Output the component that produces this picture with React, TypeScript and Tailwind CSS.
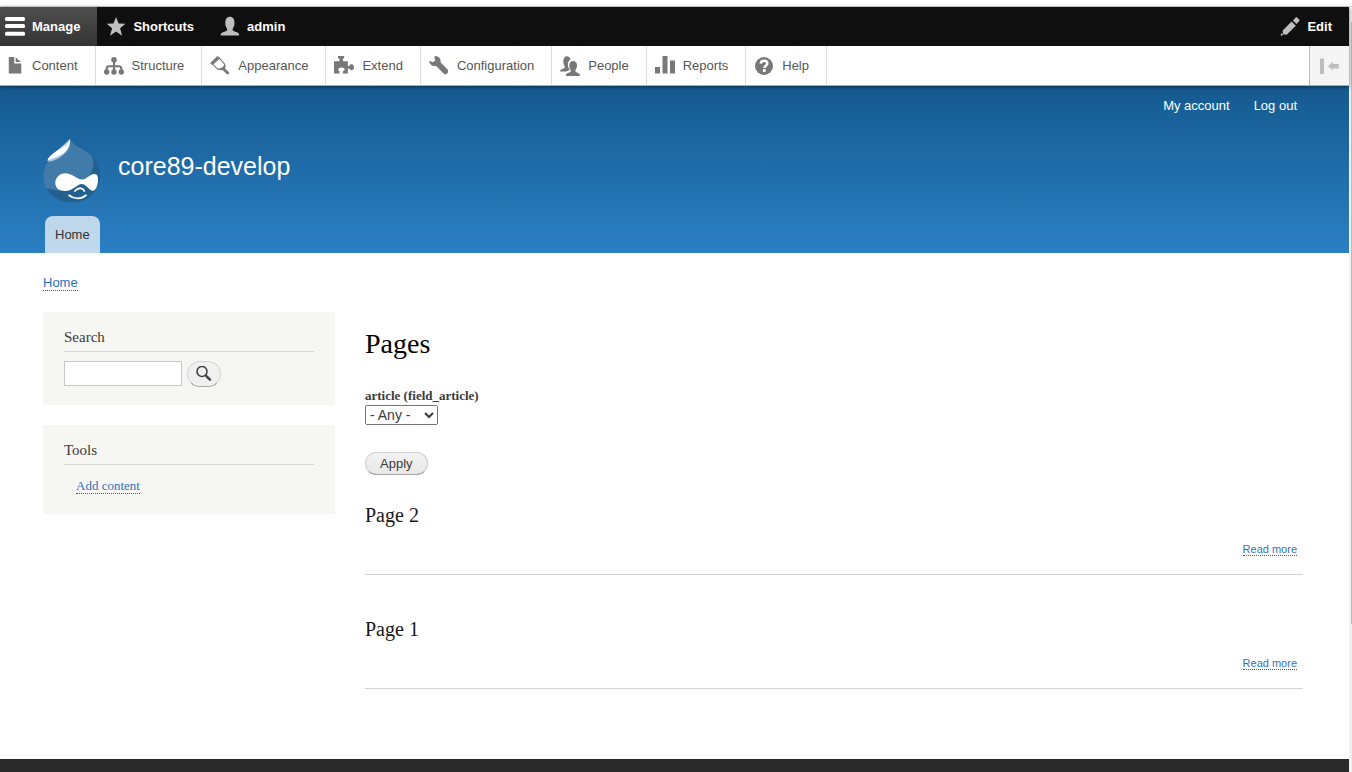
import React from 'react';

type IconProps = { className?: string };

const Svg = ({ children, className = '' }: IconProps & { children: React.ReactNode }) => (
  <svg viewBox="0 0 20 20" className={`h-5 w-5 shrink-0 ${className}`} fill="currentColor" aria-hidden="true">
    {children}
  </svg>
);

const MenuIcon = () => (
  <Svg className="-mt-px text-white">
    <rect y="1" width="20" height="4" rx="1.5" />
    <rect y="8" width="20" height="4" rx="1.5" />
    <rect y="15.700" width="20" height="4" rx="1.5" />
  </Svg>
);

const StarIcon = () => (
  <Svg className="-mt-px text-[#bebebe]">
    <path d="M10.100 0.900l2.500 6.600 6.800.3-5.300 4.500 2.100 7.500-6.100-4.400-6.100 4.400 2.100-7.500L.7 7.800l6.800-.3z" />
  </Svg>
);

const UserIcon = () => (
  <Svg className="-mt-px text-[#bebebe]">
    <path d="M.6 19.500c0-2.200 1-2.800 3-3.500 2.100-.7 3.700-1.200 3.700-2.500 0-1.200-2-2.600-2-6.600C5.300 2.800 7 .7 9.900.7s4.600 2.100 4.600 6.200c0 4-2 5.400-2 6.600 0 1.300 1.600 1.800 3.700 2.500 2 .7 3 1.300 3 3.500z" />
  </Svg>
);

const PencilIcon = () => (
  <Svg className="-mt-px text-[#bebebe]">
    <path d="M2.600 14.600L11.600 5.600l4.200 4.200-9.100 8.900-3.700-.5z" />
    <path d="M12.900 4.400l2.600-2.700c.6-.6 1.200-.6 1.800 0l1.800 1.800c.6.600.6 1.200 0 1.800l-2.700 2.600z" />
    <path d="M1.600 17l1.600 1.800-1.900.9c-.5.200-.9-.2-.7-.7z" />
  </Svg>
);

const ContentIcon = () => (
  <Svg>
    <path d="M3.800 1h5.400v6.500h7.100v10H3.800z" />
    <path d="M10.700 1.300v4.800h5.100z" />
  </Svg>
);

const StructureIcon = () => (
  <Svg>
    <circle cx="10" cy="3.700" r="2.800" />
    <circle cx="2.700" cy="16" r="2.700" />
    <circle cx="10" cy="16" r="2.700" />
    <circle cx="17.300" cy="16" r="2.700" />
    <path d="M10 4v11M2.700 15v-2.500c0-1.500.8-2.300 2.300-2.300h10c1.500 0 2.300.8 2.300 2.300V15" fill="none" stroke="currentColor" strokeWidth="2.100" />
  </Svg>
);

const AppearanceIcon = () => (
  <Svg>
    <path d="M7.300 0L9.700 2 2.300 9 0 7.300z" />
    <path d="M2.700 8.300L9.400 2l5.300 6.300c.1 2-1.600 3.800-4.300 4.500L8 13.500z" fill="white" stroke="currentColor" strokeWidth="1.100" />
    <path d="M8 13.200c3 .2 6-1.900 6.300-4.900l1.200 1.400c.4.900 0 1.900-.6 2.500l4 4.100c.7.700.4 1.200-.3 1.800-.7.700-1.300.6-1.900 0l-4.200-4.100c-.8.500-2.800.3-4.500-.8z" />
  </Svg>
);

const ExtendIcon = () => (
  <Svg>
    <path d="M0 5.200h5.500V2.800L4 2.100V0h6.200v2.100L8.900 2.800v2.400h5v4.700h1.300c.6-1.300 1.400-1.700 2.600-1.700 1.400 0 2.200 1.400 2.200 3s-.8 3-2.200 3c-1.200 0-2-.4-2.600-1.700h-1.300v4.900H8.900v-2.100c1.300-.4 1.700-1.100 1.700-1.700 0-1.200-1.400-2.100-3-2.100s-3.300.9-3.300 2.100c0 .8.5 1.300 1.200 1.700v2.100H0z" />
  </Svg>
);

const ConfigurationIcon = () => (
  <Svg>
    <path d="M.2 4.800l3.700 1.400 2.400-1.700L5.200.5c3.800-.9 7 1.800 6.300 5.800l7 7.200c1 1.200.8 2.900-.3 3.900-1.200 1.100-2.900.9-3.900-.2L7.100 9.900C3.500 10.700.2 8.500.2 4.800z" />
  </Svg>
);

const PeopleIcon = () => (
  <Svg>
    <path d="M0 15.400c0-2.300 4.800-2.400 4.800-4.300 0-1.200-1.500-2.200-1.500-5.600C3.300 2.200 4.600.2 6.900.2c2 0 3.300 1.300 3.500 3.600-1.800 1-2.500 2.600-2.500 5 0 3.300 1.700 4 1.700 5-.3 1-2.200.9-3.200 1.600z" />
    <path d="M5.800 20c0-3.800 5.100-2.900 5.100-5.200 0-1.100-1.600-1.900-1.600-5.300 0-2.900 1.400-4.500 3.800-4.500S17 6.600 17 9.500c0 3.400-1.700 4.200-1.700 5.300 0 2.300 4.700 1.400 4.700 5.200z" />
  </Svg>
);

const ReportsIcon = () => (
  <Svg>
    <rect y="11" width="5" height="6.500" />
    <rect x="7.500" width="5" height="17.500" />
    <rect x="15" y="4.500" width="5" height="13" />
  </Svg>
);

const HelpIcon = () => (
  <Svg>
    <circle cx="10" cy="10" r="9" />
    <path d="M6.800 7.600C6.900 5.700 8.100 4.800 10 4.800s3.300.9 3.300 2.600c0 2.300-2.900 2-2.900 4.700" fill="none" stroke="white" strokeWidth="2.500" />
    <rect x="8.900" y="13.200" width="2.800" height="2.700" fill="white" />
  </Svg>
);

const DropletLogo = () => (
  <svg viewBox="0 0 57 65" className="h-[65px] w-[57px]" aria-hidden="true">
    <path d="M27 0c1 4.500 5.500 7.500 12 11 11 6 18 14 18 26C57 53.500 44 64.500 28.500 64.500S.5 53 .5 38C.5 26 8 17.500 16 13 22 9.500 26.500 6 27 0z" fill="#22608f" />
    <path d="M27 0c1 4.500 5.500 7.500 12 11 6.500 3.600 11.500 6.500 11.500 13.500C50.500 39 36 51.500 21 52.500c-6 .4-12.500-.8-18.500-2.500C1.200 46.500.5 43 .5 38 .5 26 8 17.500 16 13 22 9.500 26.500 6 27 0z" fill="#417ba9" />
    <path d="M5.500 24C13 22.500 24 17 26.500 7.500L27 1 7 19z" fill="#a9c6df" />
    <path d="M26.700.5C27.500 6.500 26 11 20 15.500c-5 3.800-11 4.500-15.300 7.500-.8-3 6-8.500 11.300-11.500C21 8.500 26 6.500 26.700.5z" fill="white" />
    <path d="M12.300 45c0-5.500 4.500-9.700 10-9.700 7 0 11.500 6.200 16.700 6.200 4.500 0 8-5.500 12.500-5.500 3 0 3.700 3 3.500 6.500-.2 5-2.300 10.200-5 10.200-3.800 0-7-6.700-11.300-6.700-4.700 0-8.700 7-16.700 7-5.700 0-9.700-3-9.700-8z" fill="white" />
    <path d="M32 53c2-2.300 4-3 6-2.700 1.700.2 2.700 1 3.300 2.700M26 57.300c5 4 12 4.200 17 0" fill="none" stroke="white" strokeWidth="1.800" strokeLinecap="round" />
  </svg>
);

const trayItems = [
  { label: 'Structure', icon: StructureIcon },
  { label: 'Appearance', icon: AppearanceIcon },
  { label: 'Extend', icon: ExtendIcon },
  { label: 'Configuration', icon: ConfigurationIcon },
  { label: 'People', icon: PeopleIcon },
  { label: 'Reports', icon: ReportsIcon },
  { label: 'Help', icon: HelpIcon },
];

const pages = ['Page 2', 'Page 1'];

const Toolbar = () => (
  <div className="relative z-10 shadow-[0_1px_4px_rgba(0,0,0,0.5)]">
    <nav className="flex h-[39px] bg-[#0f0f0f] font-bold text-white" aria-label="Toolbar">
      <a href="#manage" className="flex items-center gap-[7px] bg-gradient-to-b from-[#4f4f4f] to-[#333] pr-[17px] pl-[5px]">
        <MenuIcon />
        Manage
      </a>
      <a href="#shortcuts" className="flex items-center gap-[7px] pr-[17px] pl-[9px]">
        <StarIcon />
        Shortcuts
      </a>
      <a href="#admin" className="flex items-center gap-[7px] px-[9px]">
        <UserIcon />
        admin
      </a>
      <a href="#edit" className="ml-auto flex items-center gap-[7px] pr-[17px] pl-[9px]">
        <PencilIcon />
        Edit
      </a>
    </nav>
    <nav className="flex h-10 border-b border-[#aaa] bg-white text-[#565656]" aria-label="Administration menu">
      <a href="#content" className="flex items-center gap-[7px] border-r border-[#ddd] pr-[17px] pl-[5px]">
        <span className="text-[#787878]"><ContentIcon /></span>
        Content
      </a>
      {trayItems.map(({ label, icon: Icon }) => (
        <a key={label} href={`#${label.toLowerCase()}`} className="flex items-center gap-2 border-r border-[#ddd] pr-[17px] pl-2">
          <span className="text-[#787878]"><Icon /></span>
          {label}
        </a>
      ))}
      <button type="button" aria-label="Vertical orientation" className="ml-auto flex w-10 items-center justify-center border-l border-[#bbb] bg-[#f4f4f4] text-[#bebebe]">
        <Svg>
          <rect y="2.500" width="4" height="15.500" />
          <path d="M7.800 10.200l5.200-4.400v2.300h5.800v4.400H13v2.100z" />
        </Svg>
      </button>
    </nav>
  </div>
);

const Header = () => (
  <header className="flex flex-col bg-gradient-to-b from-[#155a90] to-[#2b80c3] pr-[46px] pl-[43px] text-white">
    <nav className="flex justify-end gap-6 pt-[10px] pr-[6px] leading-5" aria-label="User account menu">
      <a href="#account">My account</a>
      <a href="#logout">Log out</a>
    </nav>
    <div className="mt-[22px] flex items-center gap-[18px]">
      <a href="#home" aria-label="Home"><DropletLogo /></a>
      <a href="#home" className="mb-[10px] text-[25px] leading-8">core89-develop</a>
    </div>
    <nav className="mt-[13px] ml-[2px] flex" aria-label="Main navigation">
      <a href="#home" className="h-[37px] rounded-t-lg bg-white/70 px-[10px] leading-[37px] text-[#333]">Home</a>
    </nav>
  </header>
);

const Sidebar = () => (
  <aside className="w-[292px] shrink-0 font-['Liberation_Serif',serif]">
    <section className="h-[93px] bg-[#f6f6f2] px-[21px] pt-4">
      <h2 className="border-b border-[#d3d5d5] pb-1 text-[15px] leading-[19px] text-[#3b3b3b]">Search</h2>
      <form className="mt-[9px] flex gap-[5px]" onSubmit={(e) => e.preventDefault()}>
        <input type="search" aria-label="Search" className="h-[25px] w-[118px] border border-[#c8c8c8] bg-white px-1" />
        <button
          type="submit"
          aria-label="Search"
          className="flex h-[26px] w-[34px] items-center justify-center rounded-full border border-[#d5d5d5] border-b-[#aaa] bg-[#f0f0f0] text-[#444]"
        >
          <svg viewBox="0 0 16 16" className="h-4 w-4" aria-hidden="true">
            <circle cx="6" cy="5.500" r="5" fill="none" stroke="currentColor" strokeWidth="1.600" />
            <path d="M9.300 9l1.300 1.300" stroke="currentColor" strokeWidth="1.600" />
            <path d="M10.600 10.300l3.400 3.400" stroke="currentColor" strokeWidth="2.600" strokeLinecap="round" />
          </svg>
        </button>
      </form>
    </section>
    <section className="mt-5 h-[89px] bg-[#f6f6f2] px-[21px] pt-4">
      <h2 className="border-b border-[#d3d5d5] pb-1 text-[15px] leading-[19px] text-[#3b3b3b]">Tools</h2>
      <ul className="mt-[14px] pl-3">
        <li className="flex">
          <a href="#add" className="border-b border-dotted border-[#0071b3] leading-[14px] text-[#3373b9]">Add content</a>
        </li>
      </ul>
    </section>
  </aside>
);

const MainContent = () => (
  <main className="min-w-0 flex-1 pt-4 font-['Liberation_Serif',serif]">
    <h1 className="text-[28px] leading-8 text-black">Pages</h1>
    <form className="mt-7 flex flex-col items-start" onSubmit={(e) => e.preventDefault()}>
      <label htmlFor="field-article" className="leading-4 font-bold text-[#3b3b3b]">article (field_article)</label>
      <select id="field-article" className="mt-px h-5 w-[73px] appearance-auto rounded-[2px] border border-[#767676] bg-white font-['Liberation_Sans',sans-serif] text-sm leading-4 text-[#3b3b3b]">
        <option>- Any -</option>
      </select>
      <button
        type="submit"
        className="mt-[27px] h-[23px] rounded-full border border-[#d0d0d0] border-b-[#a5a5a5] bg-gradient-to-b from-[#f3f3f3] to-[#e8e8e8] px-[14px] font-['Liberation_Sans',sans-serif] leading-5 text-[#3a3a3a]"
      >
        Apply
      </button>
    </form>
    <div className="mt-[27px] flex flex-col gap-[41px]">
      {pages.map((title) => (
        <article key={title} className="flex h-[73px] flex-col border-b border-[#d3d3d3] pt-px">
          <h2 className="text-xl leading-6 text-[#181818]">{title}</h2>
          <a
            href="#read-more"
            className="mt-4 mr-[6px] self-end border-b border-dotted border-[#0071b3] font-['Liberation_Sans',sans-serif] text-[11px] leading-3 text-[#3373b9]"
          >
            Read more
          </a>
        </article>
      ))}
    </div>
  </main>
);

const App: React.FC = () => (
  <div className="flex min-h-screen flex-col bg-white font-['Liberation_Sans',Arial,sans-serif] text-[13px]">
    <div className="h-[7px] border-b border-[#d8d8d8]" />
    <div className="flex flex-1">
      <div className="flex min-w-0 flex-1 flex-col">
        <Toolbar />
        <Header />
        <div className="pr-[46px] pl-[43px]">
          <nav className="flex pt-[22px]" aria-label="Breadcrumb">
            <a href="#home" className="border-b border-dotted border-[#0071b3] leading-[15px] text-[#2573bd]">Home</a>
          </nav>
          <div className="mt-[21px] flex gap-[30px] pb-[70px]">
            <Sidebar />
            <MainContent />
          </div>
        </div>
        <footer className="min-h-[13px] flex-1 bg-[#292929]" />
      </div>
      {/* Scroll track */}
      <div className="flex w-[3px] flex-col items-end bg-[#f1f1f1] pt-[15px]">
        <div className="h-[602px] w-px bg-[#bbb]" />
      </div>
    </div>
  </div>
);

export default App;
